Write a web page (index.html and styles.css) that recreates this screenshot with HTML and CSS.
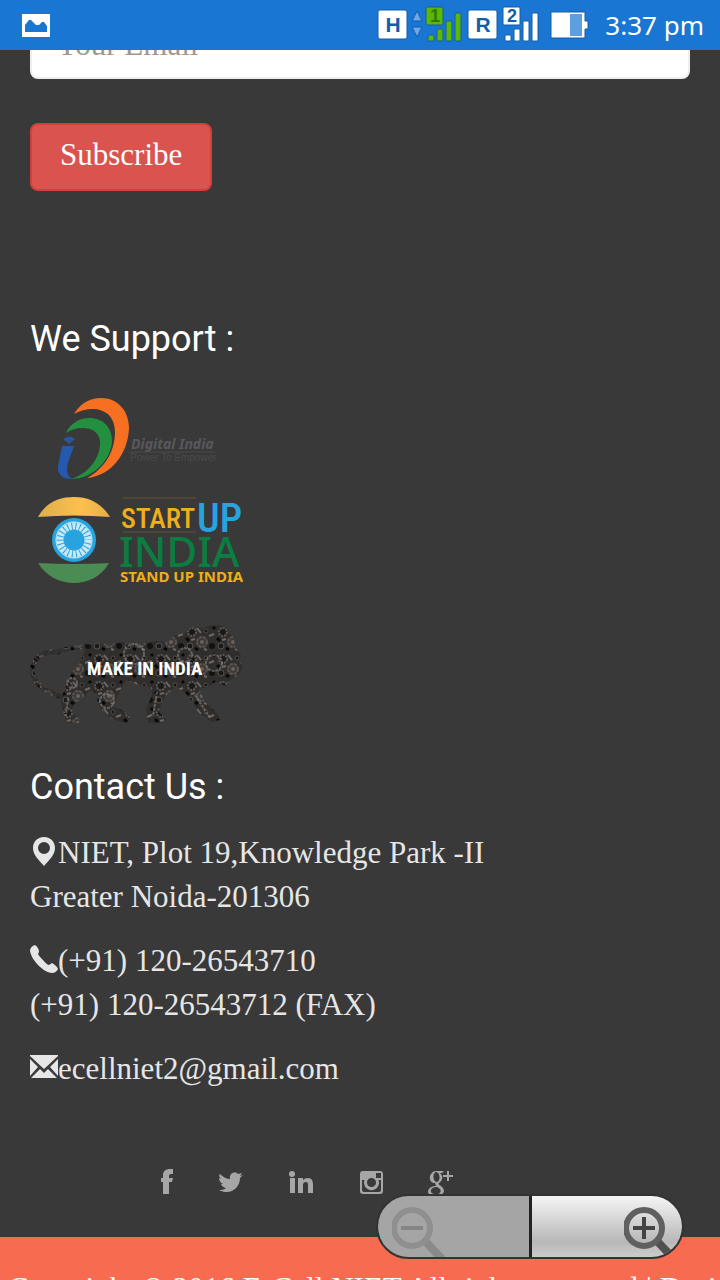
FILE: index.html
```
<!DOCTYPE html>
<html lang="en">
<head>
    <meta charset="UTF-8">
    <meta name="viewport" content="width=device-width, initial-scale=1.0">
    <title>E-Cell NIET</title>
    <link rel="stylesheet" href="styles.css">
</head>
<body>
    <header class="status-bar">
        <svg class="status-photo" width="30" height="25" viewBox="0 0 30 25">
            <rect x="1" y="1" width="28" height="23" fill="#fff"/>
            <path d="M4 19V12L8 7H10L15 12H18L21 9H23L26 13V19Z" fill="#1976d2"/>
        </svg>
        <div class="status-icons">
            <svg width="162" height="40" viewBox="0 0 162 40">
                <g stroke="#145da8" stroke-width="1">
                    <rect x="1" y="5" width="29" height="29" rx="2" fill="#fff"/>
                    <path d="M40 6L45 16H35Z" fill="#6ba6e6"/>
                    <path d="M35 22H45L40 32Z" fill="#6ba6e6"/>
                    <rect x="49" y="2" width="17" height="18" rx="1" fill="#5cb800"/>
                    <rect x="51" y="30" width="6" height="6" rx="1" fill="#5cb800"/>
                    <rect x="60" y="24" width="6" height="12" rx="1" fill="#5cb800"/>
                    <rect x="69" y="16" width="6" height="20" rx="1" fill="#5cb800"/>
                    <rect x="78" y="8" width="6" height="28" rx="1" fill="#5cb800"/>
                    <rect x="91" y="5" width="29" height="29" rx="2" fill="#fff"/>
                    <rect x="126" y="2" width="17" height="18" rx="1" fill="#fff"/>
                    <rect x="128" y="30" width="6" height="6" rx="1" fill="#fff"/>
                    <rect x="137" y="24" width="6" height="12" rx="1" fill="#fff"/>
                    <rect x="146" y="16" width="6" height="20" rx="1" fill="#fff"/>
                    <rect x="155" y="8" width="6" height="28" rx="1" fill="#fff"/>
                </g>
                <g class="badge-text" text-anchor="middle">
                    <text x="16" y="27" class="badge-large">H</text>
                    <text x="106" y="27" class="badge-large">R</text>
                    <text x="58" y="17" class="badge-small badge-green">1</text>
                    <text x="135" y="17" class="badge-small">2</text>
                </g>
            </svg>
            <svg width="39" height="28" viewBox="0 0 39 28">
                <path d="M1 1H35V10H38V18H35V27H1Z" fill="#fff" stroke="#145da8"/>
                <rect x="20" y="3" width="12" height="22" fill="#5e9fe0"/>
            </svg>
            <span class="clock">3:37 pm</span>
        </div>
    </header>

    <div class="page">
        <main class="content">
            <form class="subscribe">
                <input type="email" class="email-input" placeholder="Your Email" aria-label="Your Email">
                <button type="button" class="subscribe-btn">Subscribe</button>
            </form>

            <section class="support">
                <h2>We Support :</h2>
                <svg class="logo" width="213" height="98" viewBox="0 0 213 98">
                    <path d="M44 25C52 12 62 9 71 9C88 9 99 22 99 39C98 65 81 87 57 89C74 80 85 63 85 43C85 20 63 15 44 25Z" fill="#f77021"/>
                    <path d="M36 44C40 35 49 29 59 29C74 29 82 39 82 52C81 72 62 90 41 90C58 85 71 69 70 52C69 38 49 35 36 44Z" fill="#22903f"/>
                    <path d="M32 57H44L38 74C36 81 37 88 43 90C33 91 27 85 28 77Z" fill="#2459ad"/>
                    <path d="M33 50Q39 45 45 50L39 55Z" fill="#28569b"/>
                    <text x="101" y="60" class="digital-title">Digital India</text>
                    <path d="M100 63H185" stroke="#4b4b4d"/>
                    <text x="100" y="72" class="digital-sub">Power To Empower</text>
                </svg>
                <svg class="logo" width="213" height="112" viewBox="0 0 213 112">
                    <defs>
                        <linearGradient id="saffron">
                            <stop offset="0" stop-color="#dcae49"/>
                            <stop offset="0.6" stop-color="#fdc04f"/>
                            <stop offset="1" stop-color="#e2ad49"/>
                        </linearGradient>
                    </defs>
                    <path d="M8 30C17 14 30 10 44 10C60 10 72 17 80 30Q44 27 8 30Z" fill="url(#saffron)"/>
                    <path d="M8 76Q44 78 79 76C71 90 58 96 44 96C30 96 17 90 8 76Z" fill="#4b8b54"/>
                    <circle cx="44" cy="53" r="22" fill="#27a4e0"/>
                    <circle cx="44" cy="53" r="14" fill="none" stroke="#c9e9f7" stroke-width="7" stroke-dasharray="3 1"/>
                    <circle cx="44" cy="53" r="18" fill="none" stroke="#d8effa" stroke-width="1"/>
                    <path d="M93 11H166M93 45H166" stroke="#665331"/>
                    <text x="91" y="41" class="start-text">START</text>
                    <text x="167" y="45" class="up-text">UP</text>
                    <text x="89" y="80" class="india-text">INDIA</text>
                    <text x="90" y="95" class="stand-text">STAND UP INDIA</text>
                </svg>
                <svg class="logo logo-lion" width="213" height="98" viewBox="0 0 213 98">
                    <defs>
                        <pattern id="gears" width="31" height="27" patternUnits="userSpaceOnUse">
                            <rect width="31" height="27" fill="#302e2d"/>
                            <circle cx="7" cy="7" r="4" fill="#1a1918" stroke="#5e5855" stroke-width="2" stroke-dasharray="2 1"/>
                            <circle cx="21" cy="6" r="2" fill="#151515" stroke="#4d4946"/>
                            <circle cx="17" cy="17" r="5" fill="#3d3937" stroke="#5a5450" stroke-width="2" stroke-dasharray="3 1"/>
                            <circle cx="17" cy="17" r="2" fill="#68625e"/>
                            <circle cx="27" cy="21" r="3" fill="#111"/>
                            <circle cx="5" cy="21" r="3" fill="#1a1a1a" stroke="#58524f"/>
                            <path d="M12 3L16 8M24 11L29 9M10 14L6 15M22 25L19 24" stroke="#6e6763" stroke-width="2"/>
                            <path d="M1 13L4 16M13 25L10 23M28 2L30 4" stroke="#080808" stroke-width="3"/>
                        </pattern>
                    </defs>
                    <path d="M60 22C45 20 36 25 27 27C12 26 2 34 2 46C3 60 18 68 36 73" fill="none" stroke="url(#gears)" stroke-width="5" stroke-dasharray="6 1"/>
                    <path d="M56 22L66 18L80 19L92 17L108 20L123 16L138 17L145 10L155 8L161 2L174 3L181 0L194 1L199 8L204 12L205 22L211 30L209 36L213 42L208 50L200 55L196 61L185 57L179 62L169 64L175 77L188 89L190 95L181 97L176 92L168 88L163 77L155 68L145 61L139 68L132 76L129 87L136 94L133 98H118L116 84L122 70L121 62L105 59L96 55L90 66L86 74L84 82L96 87L101 94L96 98L82 94L72 86L67 76L68 69L60 65L52 73L43 81L42 88L50 94L49 98H37L33 88L31 74L36 61L41 48L50 37Z" fill="url(#gears)"/>
                    <g fill="none" stroke="#8c8580" stroke-width="2" stroke-dasharray="3 1" opacity="0.6">
                        <circle cx="77" cy="76" r="7"/>
                        <circle cx="42" cy="58" r="5"/>
                        <circle cx="184" cy="38" r="8"/>
                        <circle cx="104" cy="29" r="10"/>
                        <circle cx="155" cy="30" r="7"/>
                        <path d="M38 73L36 91M127 67L123 91M165 70L180 93"/>
                    </g>
                    <text x="57" y="50" class="lion-text">MAKE IN INDIA</text>
                </svg>
            </section>

            <section class="contact">
                <h2>Contact Us :</h2>
                <p><svg class="contact-icon" viewBox="0 0 28 28"><path fill-rule="evenodd" d="M14 0C7 0 3 5 3 11C3 18 9 23 14 29C19 23 25 18 25 11C25 5 21 0 14 0ZM14 5A6 6 0 1 1 14 17A6 6 0 1 1 14 5Z"/></svg>NIET, Plot 19,Knowledge Park -II<br>Greater Noida-201306</p>
                <p><svg class="contact-icon" viewBox="0 0 28 28"><path d="M5 0Q1 1 0 5C0 13 13 28 22 28Q26 28 28 24Q27 21 22 18L19 20Q17 20 13 15Q9 11 8 9L9 7Q9 3 5 0Z"/></svg><a href="tel:+9112026543710">(+91) 120-26543710</a><br>(+91) 120-26543712 (FAX)</p>
                <p><svg class="contact-icon" viewBox="0 0 28 28"><path d="M0 2H28V3L14 16L0 3ZM0 6L8 14L0 23ZM28 6L20 14L28 23ZM10 16L14 20L18 16L27 25H1Z"/></svg><a href="mailto:ecellniet2@gmail.com">ecellniet2@gmail.com</a></p>
            </section>

            <nav class="social" aria-label="Social links">
                <a href="#" aria-label="Facebook"><svg width="14" height="26" viewBox="0 0 14 26"><path d="M3 25V13H1V9H3V6C3 2 6 0 10 0H13V5H11Q9 5 9 7V9H13L12 13H9V25Z"/></svg></a>
                <a href="#" aria-label="Twitter"><svg width="26" height="26" viewBox="0 0 26 26"><path d="M2 5Q7 10 12 10C11 4 17 2 20 5L24 4L22 7L25 6L22 9C22 19 12 27 1 21Q6 21 8 19Q4 18 3 15H5Q1 13 1 9L3 10Q0 7 2 5Z"/></svg></a>
                <a href="#" aria-label="LinkedIn"><svg width="26" height="26" viewBox="0 0 26 26"><circle cx="4" cy="5" r="3"/><path d="M2 9H7V24H2ZM10 9H15V11Q17 9 20 9C24 9 25 12 25 16V24H20V16Q20 13 18 13Q15 13 15 16V24H10Z"/></svg></a>
                <a href="#" aria-label="Instagram"><svg width="26" height="26" viewBox="0 0 26 26"><path fill-rule="evenodd" d="M5 2H22Q25 2 25 5V22Q25 25 22 25H5Q2 25 2 22V5Q2 2 5 2ZM18 4V9H23V4ZM4 11V21Q4 23 6 23H21Q23 23 23 21V11H20.5A7.5 7.5 0 1 1 6.500 11ZM13.500 9A4.500 4.500 0 1 0 13.500 18A4.500 4.500 0 1 0 13.500 9Z"/></svg></a>
                <a href="#" aria-label="Google Plus"><svg width="28" height="28" viewBox="0 0 28 28"><path fill-rule="evenodd" d="M8 2H16L14 4H12C16 8 14 12 11 14C9 16 16 17 16 22C15 29 1 29 0 23C0 19 4 17 8 17L7 14C0 14 0 3 8 2ZM8 3C4 4 5 13 9 13C13 12 12 3 8 3ZM9 18C2 18 1 24 6 25C12 27 16 21 9 18Z"/><path d="M19 2H21V6H25V8H21V12H19V8H15V6H19Z"/></svg></a>
            </nav>
        </main>

        <footer class="footer">Copyright © 2016 E-Cell NIET All rights reserved | Designed by E-Cell</footer>
    </div>

    <div class="zoom-controls">
        <button type="button" class="zoom-btn zoom-out" aria-label="Zoom out" disabled>
            <svg width="58" height="50" viewBox="0 0 58 50"><path d="M33 34L50 52" stroke="#8a8a8a" stroke-width="8"/><circle cx="20" cy="21" r="18" fill="none" stroke="#8f8f8f" stroke-width="6"/><path d="M9 21H31" stroke="#858585" stroke-width="4"/></svg>
        </button>
        <button type="button" class="zoom-btn zoom-in" aria-label="Zoom in">
            <svg width="58" height="50" viewBox="0 0 58 50"><path d="M33 34L50 52" stroke="#505050" stroke-width="8"/><circle cx="20" cy="21" r="18" fill="none" stroke="#606060" stroke-width="6"/><path d="M9 21H31M20 10V32" stroke="#444" stroke-width="4"/></svg>
        </button>
    </div>
</body>
</html>
```
FILE: styles.css
```
* {
    margin: 0;
    padding: 0;
    box-sizing: border-box;
}

body {
    position: relative;
    display: flex;
    flex-direction: column;
    height: 100vh;
    overflow: hidden;
    background: #393939;
    color: #e6e6e6;
    font-family: "Liberation Serif", "Times New Roman", serif;
    font-size: 31px;
    line-height: 44px;
}

a {
    color: inherit;
    text-decoration: none;
}

svg {
    display: block;
    flex-shrink: 0;
}

/* Status bar */
.status-bar {
    display: flex;
    flex-shrink: 0;
    align-items: center;
    justify-content: space-between;
    height: 50px;
    padding: 0 16px 0 21px;
    background: #1976d2;
}

.status-icons {
    display: flex;
    align-items: center;
    gap: 11px;
}

.badge-text {
    font-family: "Liberation Sans", Arial, sans-serif;
    font-weight: bold;
    fill: #145da8;
}

.badge-large {
    font-size: 21px;
}

.badge-small {
    font-size: 18px;
}

.badge-green {
    fill: #2f7800;
}

.clock {
    padding-left: 5px;
    color: #fff;
    font-family: "Noto Sans", "Open Sans", sans-serif;
    font-size: 26px;
}

/* Page */
.page {
    flex: 1;
    min-height: 0;
    overflow: hidden;
}

.content {
    padding: 0 30px 42px;
}

.subscribe {
    margin-top: -39px;
}

.email-input {
    display: block;
    width: 100%;
    height: 68px;
    margin-bottom: 44px;
    padding: 0 24px;
    border: 2px solid #eee;
    border-radius: 8px;
    background: #fff;
    font: inherit;
}

.email-input::placeholder {
    color: #999;
}

.subscribe-btn {
    display: block;
    height: 68px;
    padding: 0 28px 4px;
    border: 2px solid #d43f3a;
    border-radius: 8px;
    background: #d9534f;
    color: #fff;
    font: inherit;
}

h2 {
    color: #fff;
    font-family: Roboto, sans-serif;
    font-size: 36px;
    font-weight: 400;
    line-height: 40px;
}

.support {
    margin-top: 128px;
}

.support h2 {
    margin-bottom: 30px;
}

.logo-lion {
    margin-top: 26px;
}

.digital-title {
    font-family: "Noto Sans", sans-serif;
    font-size: 14px;
    font-style: italic;
    font-weight: bold;
    fill: #58585b;
}

.digital-sub {
    font-family: "Liberation Sans", Arial, sans-serif;
    font-size: 10px;
    fill: #4a4a4c;
}

.start-text,
.up-text {
    font-family: "Roboto Condensed", Roboto, sans-serif;
    font-weight: 500;
}

.start-text {
    font-size: 28px;
    fill: #efae1b;
}

.up-text {
    font-size: 40px;
    fill: #27a4e0;
}

.india-text {
    font-family: "Noto Sans", sans-serif;
    font-size: 42px;
    font-weight: 500;
    fill: #0b7d41;
}

.stand-text {
    font-family: "Noto Sans", sans-serif;
    font-size: 15px;
    font-weight: bold;
    fill: #efae1b;
}

.lion-text {
    font-family: "Roboto Condensed", Roboto, sans-serif;
    font-size: 19px;
    font-weight: bold;
    fill: #fff;
}

/* Contact */
.contact {
    margin-top: 44px;
}

.contact h2 {
    margin-bottom: 24px;
}

.contact p {
    margin-bottom: 20px;
}

.contact-icon {
    display: inline-block;
    width: 28px;
    height: 28px;
    overflow: visible;
    vertical-align: -2px;
    fill: #e6e6e6;
}

.social {
    display: flex;
    gap: 44px;
    height: 26px;
    margin-top: 78px;
    padding-left: 130px;
    fill: #a6a6a6;
}

.footer {
    padding: 30px 8px;
    background: #f76c51;
    color: #fff;
    white-space: nowrap;
}

/* Browser zoom buttons, floating over the page */
.zoom-controls {
    position: absolute;
    right: 36px;
    bottom: 21px;
    display: flex;
    gap: 3px;
    width: 308px;
    height: 65px;
    border: 2px solid #333;
    border-radius: 33px;
    background: #222;
    overflow: hidden;
}

.zoom-btn {
    display: flex;
    align-items: flex-end;
    width: 50%;
    border: none;
}

.zoom-out {
    padding-left: 14px;
    background: #a5a5a5;
}

.zoom-in {
    justify-content: flex-end;
    background: linear-gradient(#f5f5f5, #b8b8b8 75%, #ccc);
}
```
